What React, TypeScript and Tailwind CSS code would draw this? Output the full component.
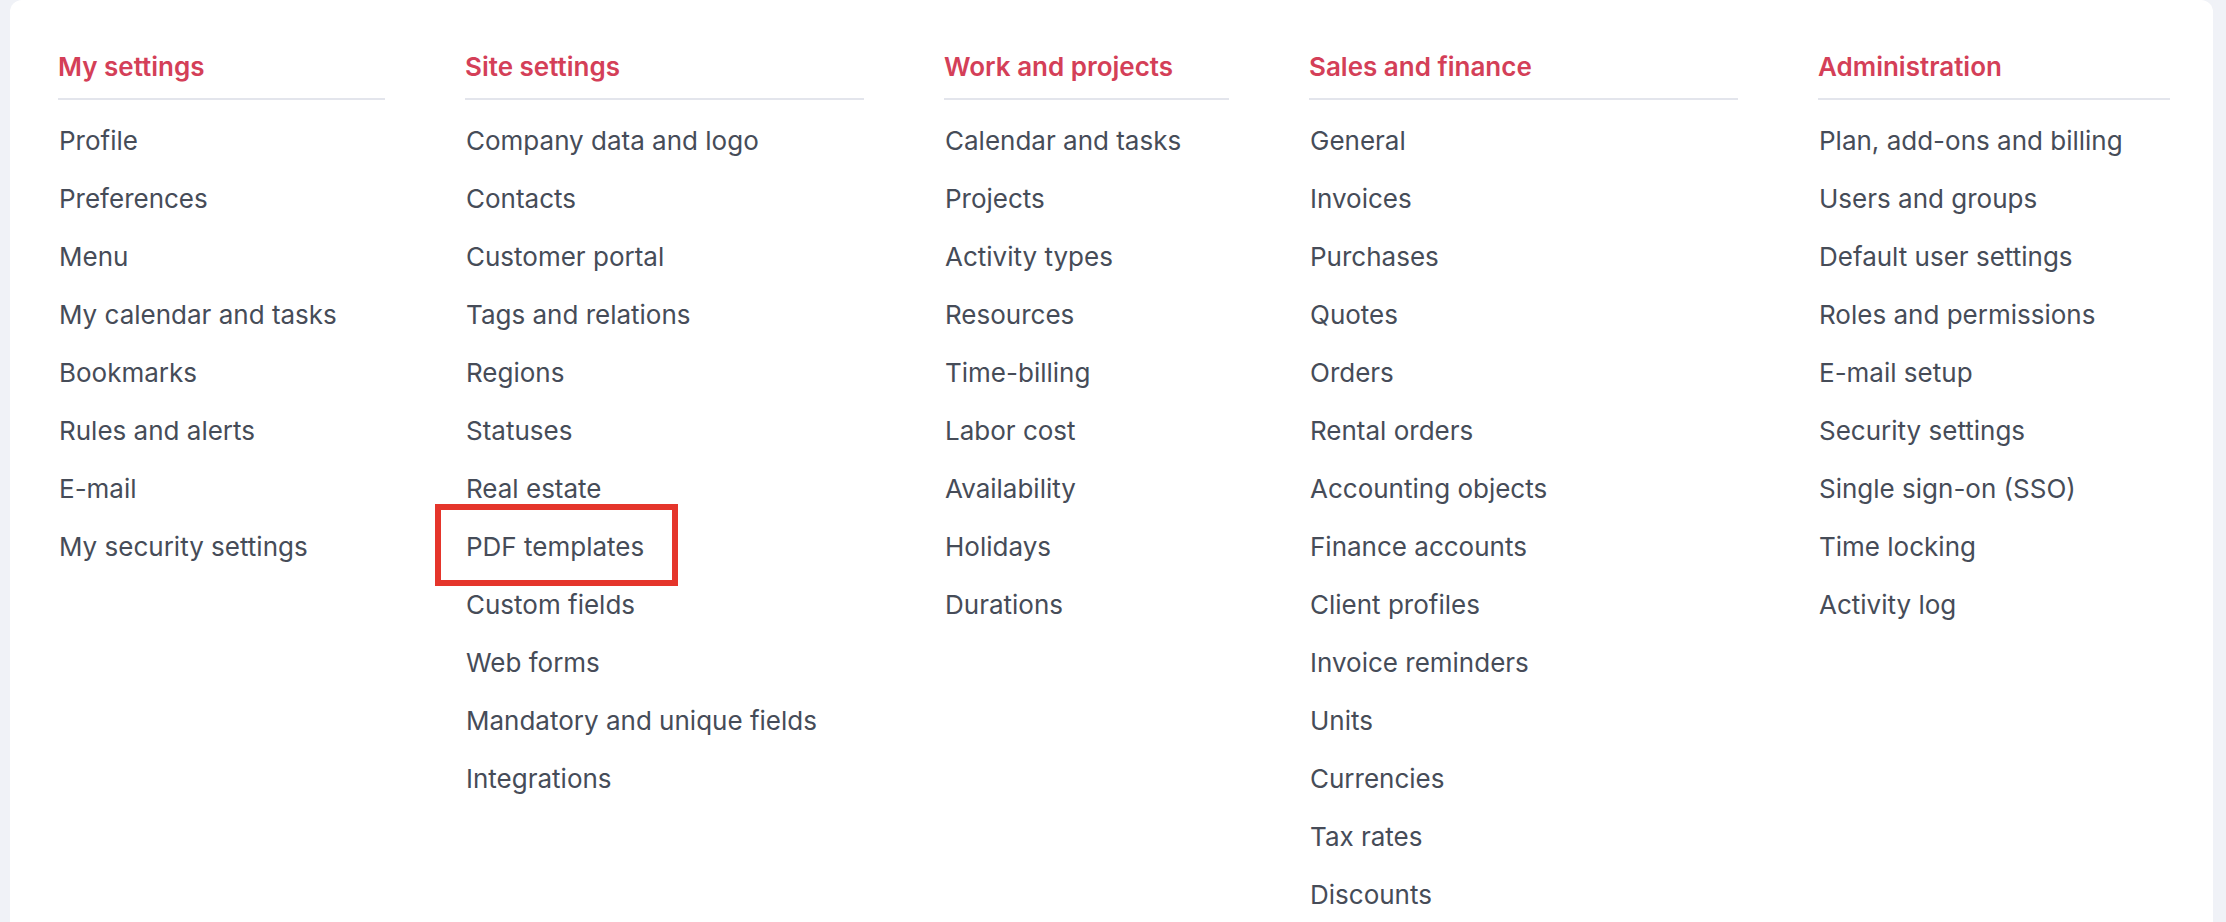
const COLUMNS: { title: string; width: string; items: string[] }[] = [
  {
    title: 'My settings',
    width: 'w-[327px]',
    items: ['Profile', 'Preferences', 'Menu', 'My calendar and tasks', 'Bookmarks', 'Rules and alerts', 'E-mail', 'My security settings'],
  },
  {
    title: 'Site settings',
    width: 'w-[399px]',
    items: [
      'Company data and logo', 'Contacts', 'Customer portal', 'Tags and relations', 'Regions', 'Statuses',
      'Real estate', 'PDF templates', 'Custom fields', 'Web forms', 'Mandatory and unique fields', 'Integrations',
    ],
  },
  {
    title: 'Work and projects',
    width: 'w-[285px]',
    items: ['Calendar and tasks', 'Projects', 'Activity types', 'Resources', 'Time-billing', 'Labor cost', 'Availability', 'Holidays', 'Durations'],
  },
  {
    title: 'Sales and finance',
    width: 'w-[429px]',
    items: [
      'General', 'Invoices', 'Purchases', 'Quotes', 'Orders', 'Rental orders', 'Accounting objects', 'Finance accounts',
      'Client profiles', 'Invoice reminders', 'Units', 'Currencies', 'Tax rates', 'Discounts',
    ],
  },
  {
    title: 'Administration',
    width: 'w-[352px]',
    items: [
      'Plan, add-ons and billing', 'Users and groups', 'Default user settings', 'Roles and permissions', 'E-mail setup',
      'Security settings', 'Single sign-on (SSO)', 'Time locking', 'Activity log',
    ],
  },
]

const HIGHLIGHT = 'PDF templates'

export default function App() {
  return (
    <div className="h-[922px] w-full overflow-hidden bg-[#f0f2f7] pl-[10px] pr-[13px] font-['Inter',sans-serif]">
      <div className="h-full rounded-t-[12px] bg-white pl-[48px] pt-[50px]">
        <div className="flex gap-[80px]">
          {COLUMNS.map(col => (
            <div key={col.title} className={`${col.width} flex-shrink-0`}>
              <h2 className="border-b-2 border-[#e3e5ec] pb-[14px] text-[26px] font-semibold leading-[34px] text-[#d43f58]">
                {col.title}
              </h2>
              <ul className="mt-[12px]">
                {col.items.map(item => (
                  <li key={item} className="relative pl-px text-[26px] leading-[58px] text-[#464c58]">
                    {item}
                    {item === HIGHLIGHT && (
                      <span className="pointer-events-none absolute bottom-[-10px] left-[-30px] top-[-14px] w-[243px] border-[6px] border-[#e5352b]" />
                    )}
                  </li>
                ))}
              </ul>
            </div>
          ))}
        </div>
      </div>
    </div>
  )
}
